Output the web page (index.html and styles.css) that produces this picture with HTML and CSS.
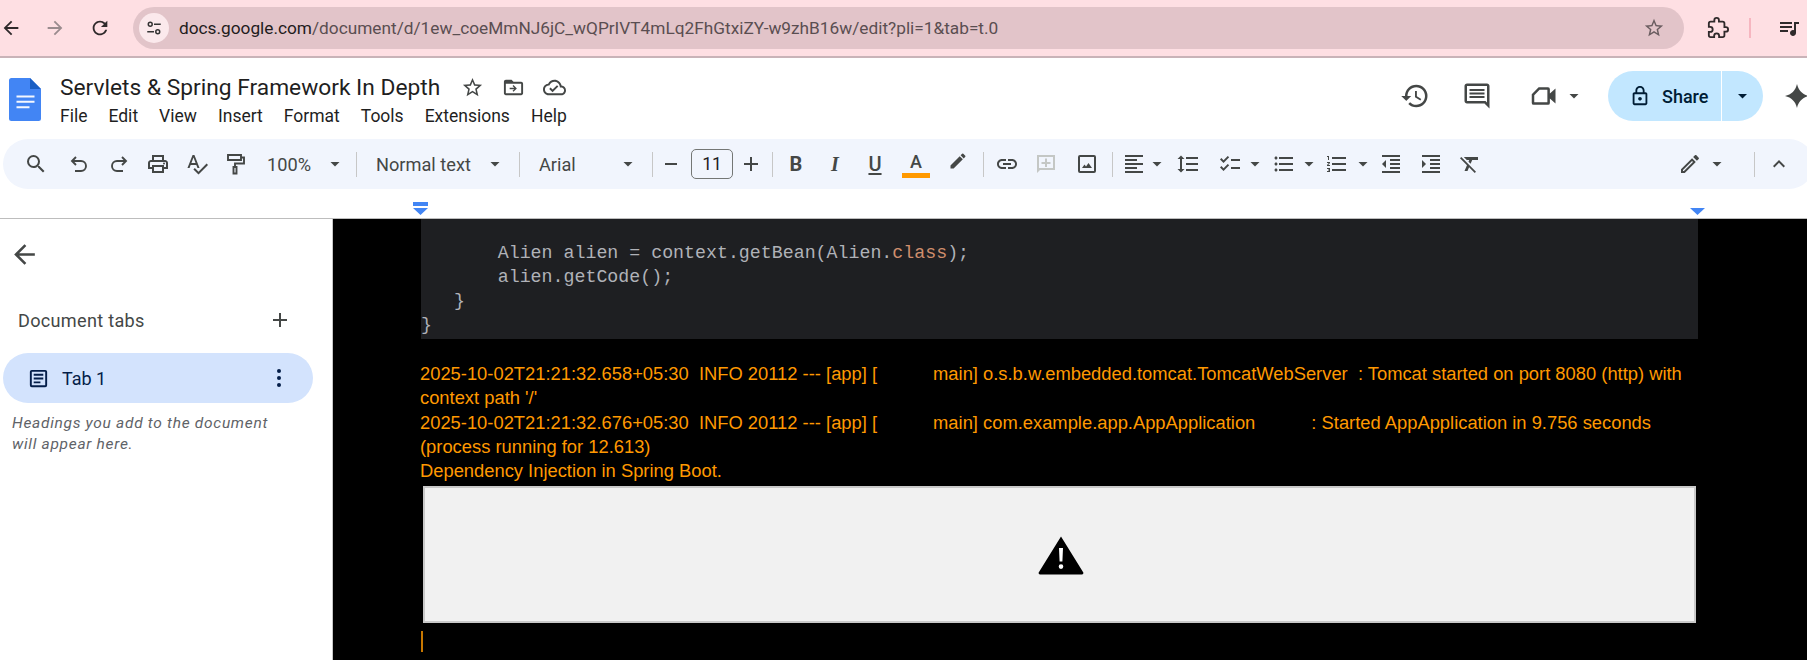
FILE: index.html
```html
<!DOCTYPE html>
<html lang="en">
<head>
<meta charset="utf-8">
<title>Servlets &amp; Spring Framework In Depth - Google Docs</title>
<link rel="stylesheet" href="styles.css">
</head>
<body>
<header class="chrome">
  <svg class="ci back" viewBox="0 0 24 24"><path d="M20 11H7.830l5.590-5.590L12 4l-8 8 8 8 1.410-1.410L7.830 13H20v-2z"/></svg>
  <svg class="ci fwd" viewBox="0 0 24 24"><path d="M12 4l-1.410 1.410L16.170 11H4v2h12.170l-5.580 5.590L12 20l8-8z"/></svg>
  <svg class="ci reload" viewBox="0 0 24 24"><path d="M17.650 6.350A7.958 7.958 0 0 0 12 4c-4.420 0-7.990 3.580-7.990 8s3.570 8 7.990 8c3.730 0 6.840-2.550 7.730-6h-2.080A5.990 5.990 0 0 1 12 18c-3.310 0-6-2.690-6-6s2.690-6 6-6c1.660 0 3.140.69 4.220 1.780L13 11h7V4l-2.350 2.350z"/></svg>
  <div class="omnibox">
    <span class="tune"><svg viewBox="0 0 24 24" class="tune-i"><circle cx="7" cy="7" r="2.600"/><path d="M12 7h9M3 17h9"/><circle cx="17" cy="17" r="2.600"/></svg></span>
    <span class="url"><b>docs.google.com</b>/document/d/1ew_coeMmNJ6jC_wQPrIVT4mLq2FhGtxiZY-w9zhB16w/edit?pli=1&amp;tab=t.0</span>
    <svg class="ci url-star" viewBox="0 0 24 24"><path d="M22 9.240l-7.190-.62L12 2 9.190 8.630 2 9.240l5.460 4.730L5.820 21 12 17.270 18.180 21l-1.630-7.030L22 9.240zM12 15.400l-3.760 2.270 1-4.280-3.320-2.880 4.380-.38L12 6.100l1.710 4.040 4.380.38-3.320 2.880 1 4.280L12 15.400z"/></svg>
  </div>
  <svg class="ci puzzle" viewBox="0 0 24 24"><path d="M20.500 11H19V7c0-1.100-.9-2-2-2h-4V3.500C13 2.120 11.880 1 10.500 1S8 2.120 8 3.500V5H4c-1.100 0-1.990.9-1.990 2v3.800H3.500c1.490 0 2.700 1.210 2.700 2.700s-1.210 2.700-2.700 2.700H2V20c0 1.100.9 2 2 2h3.800v-1.500c0-1.490 1.210-2.700 2.700-2.700 1.490 0 2.700 1.210 2.700 2.700V22H17c1.100 0 2-.9 2-2v-4h1.500c1.380 0 2.500-1.120 2.500-2.500S21.880 11 20.500 11z"/></svg>
  <span class="chrome-div"></span>
  <svg class="ci music" viewBox="0 0 24 24"><path d="M15 6H3v2h12V6zm0 4H3v2h12v-2zM3 16h8v-2H3v2zM17 6v8.180c-.31-.11-.65-.18-1-.18-1.660 0-3 1.340-3 3s1.340 3 3 3 3-1.340 3-3V8h3V6h-5z"/></svg>
</header>

<section class="docbar">
  <svg class="logo" viewBox="0 0 32 43"><path class="logo-page" d="M2.500 0H21l11 11v29.500a2.500 2.500 0 0 1-2.500 2.500h-27A2.500 2.500 0 0 1 0 40.500v-38A2.500 2.500 0 0 1 2.500 0z"/><path class="logo-fold" d="M21 0l11 11H21z"/><path class="logo-line" d="M7.500 17.500h18v2h-18zM7.500 22.800h18v2h-18zM7.500 28.200h13v2h-13z"/></svg>
  <div class="docmeta">
    <div class="titlerow">
      <h1 class="title">Servlets &amp; Spring Framework In Depth</h1>
      <svg class="ti first" viewBox="0 0 24 24"><path d="M22 9.240l-7.190-.62L12 2 9.190 8.630 2 9.240l5.460 4.730L5.820 21 12 17.270 18.180 21l-1.630-7.030L22 9.240zM12 15.400l-3.760 2.270 1-4.280-3.320-2.880 4.380-.38L12 6.100l1.710 4.040 4.380.38-3.320 2.880 1 4.280L12 15.400z"/></svg>
      <svg class="ti" viewBox="0 0 24 24"><path d="M20 6h-8l-2-2H4c-1.100 0-2 .9-2 2v12c0 1.100.9 2 2 2h16c1.100 0 2-.9 2-2V8c0-1.100-.9-2-2-2zm0 12H4V8h16v10zM12 9.500l-1 1 1.800 1.800H8v1.400h4.800L11 15.500l1 1 3.500-3.500z"/></svg>
      <svg class="ti" viewBox="0 0 24 24"><path d="M19.350 10.040C18.670 6.590 15.640 4 12 4 9.110 4 6.600 5.640 5.350 8.040 2.340 8.360 0 10.910 0 14c0 3.310 2.690 6 6 6h13c2.760 0 5-2.240 5-5 0-2.640-2.050-4.780-4.650-4.960zM19 18H6c-2.210 0-4-1.790-4-4 0-2.050 1.530-3.760 3.560-3.970l1.070-.11.5-.95C8.080 7.140 9.940 6 12 6c2.620 0 4.880 1.860 5.390 4.430l.3 1.500 1.530.11c1.560.1 2.780 1.410 2.780 2.960 0 1.650-1.350 3-3 3zm-9-3.820l-2.090-2.090L6.500 13.500 10 17l6.010-6.010-1.410-1.410z"/></svg>
    </div>
    <nav class="menu"><span>File</span><span>Edit</span><span>View</span><span>Insert</span><span>Format</span><span>Tools</span><span>Extensions</span><span>Help</span></nav>
  </div>
  <div class="docactions">
    <svg class="ai" viewBox="0 0 24 24"><path d="M13 3a9 9 0 0 0-9 9H1l3.890 3.890.07.14L9 12H6c0-3.870 3.130-7 7-7s7 3.130 7 7-3.130 7-7 7c-1.930 0-3.680-.79-4.940-2.060l-1.420 1.420A8.954 8.954 0 0 0 13 21a9 9 0 0 0 0-18zm-1 5v5l4.280 2.540.72-1.210-3.500-2.080V8H12z"/></svg>
    <svg class="ai comment" viewBox="0 0 24 24"><path d="M22 4c0-1.100-.9-2-2-2H4c-1.100 0-2 .9-2 2v12c0 1.100.9 2 2 2h14l4 4V4zm-2 13.170L18.830 16H4V4h16v13.170zM6 12h12v1.600H6zM6 9.200h12v1.600H6zM6 6.400h12V8H6z"/></svg>
    <svg class="ai video" viewBox="0 0 24 24"><path d="M8.500 5H16a1.500 1.500 0 0 1 1.500 1.500V10l4.500-4v12l-4.500-4v3.500A1.500 1.500 0 0 1 16 19H4.500A1.500 1.500 0 0 1 3 17.500V10.500zM9.300 7 5 11.300V17h10.500V7z"/></svg>
    <span class="caret video-caret"></span>
    <div class="share">
      <span class="share-main">
        <svg class="lock" viewBox="0 0 24 24"><path d="M18 8h-1V6c0-2.760-2.240-5-5-5S7 3.240 7 6v2H6c-1.100 0-2 .9-2 2v10c0 1.100.9 2 2 2h12c1.100 0 2-.9 2-2V10c0-1.100-.9-2-2-2zM9 6c0-1.660 1.340-3 3-3s3 1.340 3 3v2H9V6zm9 14H6V10h12v10zm-6-3c1.100 0 2-.9 2-2s-.9-2-2-2-2 .9-2 2 .9 2 2 2z"/></svg>
        Share
      </span>
      <span class="share-more"><span class="caret dark"></span></span>
    </div>
    <svg class="gem" viewBox="0 0 24 24"><path d="M12 0c1.500 6.500 5.500 10.500 12 12-6.500 1.500-10.500 5.500-12 12-1.500-6.500-5.500-10.500-12-12 6.500-1.500 10.500-5.500 12-12z"/></svg>
  </div>
</section>

<section class="toolbar">
  <svg class="i" viewBox="0 0 24 24"><path d="M15.500 14h-.79l-.28-.27A6.471 6.471 0 0 0 16 9.500 6.500 6.500 0 1 0 9.500 16c1.610 0 3.090-.59 4.230-1.570l.27.28v.79l5 4.990L20.490 19l-4.990-5zm-6 0C7.010 14 5 11.990 5 9.500S7.010 5 9.500 5 14 7.010 14 9.500 11.990 14 9.500 14z"/></svg>
  <svg class="i s m19" viewBox="0 0 24 24"><path d="M9 5 5 9l4 4M5 9h9a5 5 0 0 1 0 10H8"/></svg>
  <svg class="i s m16" viewBox="0 0 24 24"><path d="M15 5l4 4-4 4M19 9h-9a5 5 0 0 0 0 10h6"/></svg>
  <svg class="i m15" viewBox="0 0 24 24"><path d="M19 8h-1V3H6v5H5c-1.660 0-3 1.340-3 3v6h4v4h12v-4h4v-6c0-1.660-1.340-3-3-3zM8 5h8v3H8V5zm8 14H8v-4h8v4zm2-4v-2H6v2H4v-4c0-.55.45-1 1-1h14c.55 0 1 .45 1 1v4h-2z"/><circle cx="18" cy="11.500" r="1"/></svg>
  <svg class="i m15" viewBox="0 0 24 24"><path d="M12.450 16h2.090L9.430 3H7.570L2.460 16h2.090l1.120-3h5.640l1.140 3zm-6.020-5L8.500 5.480 10.570 11H6.430zm15.160.59l-8.090 8.090L9.830 16l-1.410 1.410 5.090 5.090L23 13l-1.410-1.410z"/></svg>
  <svg class="i s m14" viewBox="0 0 24 24"><path d="M5 3h13v5H5zM18 5.500h3v6h-9V15M10.500 15h3v6.500h-3z"/></svg>
  <span class="tt zoomv m20">100%</span>
  <span class="caret m16"></span>
  <span class="sep m15"></span>
  <span class="tt stylev m19">Normal text</span>
  <span class="caret m17"></span>
  <span class="sep m18"></span>
  <span class="tt fontv m19">Arial</span>
  <span class="caret m46"></span>
  <span class="sep m18"></span>
  <svg class="i m6" viewBox="0 0 24 24"><path d="M6 11h12v2H6z"/></svg>
  <span class="sizebox m8">11</span>
  <svg class="i m6" viewBox="0 0 24 24"><path d="M19 13h-6v6h-2v-6H5v-2h6V5h2v6h6v2z"/></svg>
  <span class="sep m9"></span>
  <span class="fmt bold m11">B</span>
  <span class="fmt ital m15">I</span>
  <span class="fmt under m16">U</span>
  <span class="fmt color m15">A<i class="colorbar"></i></span>
  <svg class="hl m18" viewBox="0 0 24 24"><path d="M3 17.250V21h3.750L17.810 9.940l-3.750-3.750L3 17.250zM20.710 7.040a.996.996 0 0 0 0-1.410l-2.340-2.340a.996.996 0 0 0-1.410 0l-1.830 1.830 3.750 3.750 1.830-1.830z"/></svg>
  <span class="sep m15"></span>
  <svg class="i m11" viewBox="0 0 24 24"><path d="M3.900 12c0-1.710 1.390-3.100 3.100-3.100h4V7H7c-2.760 0-5 2.240-5 5s2.240 5 5 5h4v-1.900H7c-1.710 0-3.100-1.390-3.100-3.100zM8 13h8v-2H8v2zm9-6h-4v1.900h4c1.710 0 3.100 1.390 3.100 3.100s-1.390 3.100-3.100 3.100h-4V17h4c2.760 0 5-2.240 5-5s-2.240-5-5-5z"/></svg>
  <svg class="i dim m15" viewBox="0 0 24 24"><path d="M3 3h18v15H6l-3 3zM5 5v11.200L5.200 16H19V5zM11 6.500h2V10h3.500v2H13v3h-2v-3H7.500v-2H11z"/></svg>
  <svg class="i m17" viewBox="0 0 24 24"><path d="M19 3H5a2 2 0 0 0-2 2v14a2 2 0 0 0 2 2h14a2 2 0 0 0 2-2V5a2 2 0 0 0-2-2zm0 16H5V5h14v14zM13.500 11l-2.500 3.500-1.500-2L7 16h10z"/></svg>
  <span class="sep m13"></span>
  <svg class="i m9" viewBox="0 0 24 24"><path d="M3 3h18v2H3zM3 7h12v2H3zM3 11h18v2H3zM3 15h12v2H3zM3 19h18v2H3z"/></svg>
  <span class="caret m5"></span>
  <svg class="i m13" viewBox="0 0 24 24"><path d="M6 7h2.500L5 3.500 1.500 7H4v10H1.500L5 20.500 8.500 17H6V7zm4-2v2h12V5H10zm0 14h12v-2H10v2zm0-6h12v-2H10v2z"/></svg>
  <svg class="i m18" viewBox="0 0 24 24"><path d="M22 7h-9v2h9V7zm0 8h-9v2h9v-2zM5.540 11 2 7.460l1.410-1.410 2.120 2.120 4.240-4.240 1.410 1.410L5.540 11zm0 8L2 15.460l1.410-1.410 2.120 2.120 4.240-4.240 1.410 1.410L5.540 19z"/></svg>
  <span class="caret m7"></span>
  <svg class="i m11" viewBox="0 0 24 24"><path d="M4 10.500c-.83 0-1.500.67-1.500 1.500s.67 1.500 1.500 1.500 1.500-.67 1.500-1.500-.67-1.500-1.500-1.500zm0-6c-.83 0-1.500.67-1.500 1.500S3.170 7.500 4 7.500 5.500 6.830 5.500 6 4.830 4.500 4 4.500zm0 12c-.83 0-1.500.68-1.500 1.500s.68 1.500 1.500 1.500 1.500-.68 1.500-1.500-.67-1.500-1.500-1.500zM7 19h14v-2H7v2zm0-6h14v-2H7v2zm0-8v2h14V5H7z"/></svg>
  <span class="caret m7"></span>
  <svg class="i m10" viewBox="0 0 24 24"><path d="M2 17h2v.5H3v1h1v.5H2v1h3v-4H2v1zm1-9h1V4H2v1h1v3zm-1 3h1.800L2 13.100v.9h3v-1H3.200L5 10.900V10H2v1zm5-6v2h14V5H7zm0 14h14v-2H7v2zm0-6h14v-2H7v2z"/></svg>
  <span class="caret m8"></span>
  <svg class="i m10" viewBox="0 0 24 24"><path d="M11 17h10v-2H11v2zm-8-5l4 4V8l-4 4zm0 9h18v-2H3v2zM3 3v2h18V3H3zm8 6h10V7H11v2zm0 4h10v-2H11v2z"/></svg>
  <svg class="i m16" viewBox="0 0 24 24"><path d="M3 21h18v-2H3v2zM3 8v8l4-4-4-4zm8 9h10v-2H11v2zM3 3v2h18V3H3zm8 6h10V7H11v2zm0 4h10v-2H11v2z"/></svg>
  <svg class="i m15" viewBox="0 0 24 24"><path d="M3.270 5L2 6.270l6.970 6.970L6.500 19h3l1.570-3.660L16.730 21 18 19.730 3.550 5.270 3.270 5zM6 5v.18L8.820 8h2.400l-.72 1.680 2.100 2.100L14.210 8H20V5H6z"/></svg>
  <svg class="i push" viewBox="0 0 24 24"><path d="M14.060 9.020l.92.92L5.920 19H5v-.92l9.060-9.060M17.660 3c-.25 0-.51.1-.7.29l-1.830 1.830 3.750 3.750 1.830-1.830c.39-.39.39-1.020 0-1.410l-2.340-2.340c-.2-.2-.45-.29-.71-.29zm-3.600 3.190L3 17.250V21h3.750L17.810 9.940l-3.750-3.750z"/></svg>
  <span class="caret m9"></span>
  <span class="sep m31"></span>
  <svg class="i m12" viewBox="0 0 24 24"><path d="M7.410 15.410 12 10.830l4.590 4.580L18 14l-6-6-6 6z"/></svg>
</section>

<section class="ruler">
  <svg class="mark-left" viewBox="0 0 15 13"><path d="M0 0h15v4H0zM0 6h15l-7.500 7z"/></svg>
  <svg class="mark-right" viewBox="0 0 15 7"><path d="M0 0h15l-7.500 7z"/></svg>
</section>

<main class="workspace">
  <aside class="sidebar">
    <svg class="side-back" viewBox="0 0 24 24"><path d="M20 11H7.830l5.590-5.590L12 4l-8 8 8 8 1.410-1.410L7.830 13H20v-2z"/></svg>
    <div class="side-head"><span>Document tabs</span><svg class="side-ic" viewBox="0 0 24 24"><path d="M19 13h-6v6h-2v-6H5v-2h6V5h2v6h6v2z"/></svg></div>
    <div class="tab">
      <svg class="tab-doc" viewBox="0 0 24 24"><path d="M19 3H5a2 2 0 0 0-2 2v14a2 2 0 0 0 2 2h14a2 2 0 0 0 2-2V5a2 2 0 0 0-2-2zm0 16H5V5h14zM7 7h10v2H7zM7 11h10v2H7zM7 15h7v2H7z"/></svg>
      <span class="tab-name">Tab 1</span>
      <svg class="side-ic dots" viewBox="0 0 24 24"><circle cx="12" cy="5" r="2"/><circle cx="12" cy="12" r="2"/><circle cx="12" cy="19" r="2"/></svg>
    </div>
    <p class="side-note">Headings you add to the document<br>will appear here.</p>
  </aside>
  <article class="page">
    <div class="code">
      <div class="cl">       Alien alien = context.getBean(Alien.<span class="kw">class</span>);</div>
      <div class="cl">       alien.getCode();</div>
      <div class="cl">   }</div>
      <div class="cl">}</div>
    </div>
    <div class="log">
      <div class="ll">2025-10-02T21:21:32.658+05:30  INFO 20112 --- [app] [           main] o.s.b.w.embedded.tomcat.TomcatWebServer  : Tomcat started on port 8080 (http) with</div>
      <div class="ll">context path '/'</div>
      <div class="ll">2025-10-02T21:21:32.676+05:30  INFO 20112 --- [app] [           main] com.example.app.AppApplication           : Started AppApplication in 9.756 seconds</div>
      <div class="ll">(process running for 12.613)</div>
      <div class="ll">Dependency Injection in Spring Boot.</div>
    </div>
    <div class="broken">
      <svg class="warn" viewBox="0 0 46 40"><path d="M23 1.500 45 37a1.500 1.500 0 0 1-1.300 2.500H2.300A1.500 1.500 0 0 1 1 37z" /><path class="warn-mark" d="M21 13h4l-.6 13.500h-2.800zM23 29.300a2.300 2.300 0 1 1 0 4.600 2.300 2.300 0 0 1 0-4.600z"/></svg>
    </div>
    <span class="cursor"></span>
  </article>
</main>
</body>
</html>
```
FILE: styles.css
```css
* { box-sizing: border-box; }
html, body { margin: 0; padding: 0; }
body {
  width: 1807px;
  height: 660px;
  overflow: hidden;
  background: #fff;
  font-family: Roboto, "Liberation Sans", sans-serif;
  color: #444746;
}
svg { display: block; flex: none; fill: currentColor; }

/* browser chrome */
.chrome {
  display: flex;
  align-items: center;
  height: 58px;
  background: #fedfe3;
  border-bottom: 2px solid #c9b3b8;
  color: #2f2a2b;
}
.ci { width: 22px; height: 22px; }
.fwd { margin-left: 22px; color: #9a8b8e; }
.reload { margin-left: 23px; }
.omnibox {
  display: flex;
  align-items: center;
  width: 1551px;
  height: 42px;
  margin-left: 22px;
  padding-left: 6px;
  padding-right: 19px;
  border-radius: 21px;
  background: #e2c4c9;
}
.tune {
  display: flex;
  align-items: center;
  justify-content: center;
  width: 30px;
  height: 30px;
  border-radius: 50%;
  background: #fbe9ec;
}
.tune-i { width: 18px; height: 18px; fill: none; stroke: #333; stroke-width: 2; }
.url {
  margin-left: 10px;
  font-size: 17.260px;
  color: #5a4e51;
  white-space: nowrap;
  flex: 1;
}
.url b { font-weight: 400; color: #1f1c1d; }
.url-star { color: #6a5d60; }
.puzzle {
  margin-left: 23px;
  fill: none;
  stroke: #2f2a2b;
  stroke-width: 2;
}
.chrome-div { width: 2px; height: 20px; margin-left: 20px; background: #f6b6c0; }
.music { width: 24px; height: 24px; margin-left: 26px; }

/* document header */
.docbar {
  display: flex;
  height: 81px;
  padding-top: 13px;
}
.logo { width: 32px; height: 43px; margin: 7px 0 0 9px; }
.logo-page { fill: #4285f4; }
.logo-fold { fill: #1a5fc4; }
.logo-line { fill: #f4f7fe; }
.docmeta { margin-left: 19px; display: flex; flex-direction: column; }
.titlerow { display: flex; align-items: center; height: 32px; }
.title { margin: 0; font-size: 22.750px; font-weight: 400; color: #1f1f1f; white-space: nowrap; }
.ti { width: 23px; height: 23px; margin-left: 18px; }
.ti.first { margin-left: 21px; }
.menu { display: flex; gap: 21px; margin-top: 1px; font-size: 17.500px; color: #1f1f1f; line-height: 24px; }
.docactions { display: flex; align-items: center; margin-left: auto; height: 50px; }
.ai { width: 30px; height: 30px; }
.comment { margin-left: 32px; }
.video { margin-left: 36px; }
.video-caret { margin-left: 10px; }
.share {
  display: flex;
  align-items: stretch;
  height: 50px;
  width: 155px;
  margin-left: 28px;
  border-radius: 25px;
  overflow: hidden;
  background: #c2e7ff;
  color: #001d35;
}
.share-main {
  display: flex;
  align-items: center;
  width: 114px;
  padding-left: 21px;
  font-size: 18px;
  font-weight: 500;
  border-right: 1px solid #fff;
}
.lock { width: 22px; height: 22px; margin-right: 11px; }
.share-more { flex: 1; display: flex; align-items: center; justify-content: center; }
.gem { width: 24px; height: 24px; margin-left: 22px; margin-right: -2px; color: #444746; }

/* toolbar */
.toolbar {
  display: flex;
  align-items: center;
  height: 50px;
  margin: 0 -7px 0 3px;
  padding: 0 23px 0 21px;
  border-radius: 25px;
  background: #f1f5fd;
}
.i { width: 24px; height: 24px; }
.i.s { fill: none; stroke: currentColor; stroke-width: 1.9; }
.dim { color: #c4c7c5; }
.push { margin-left: auto; }
.tt { font-size: 18.200px; white-space: nowrap; }
.zoomv { width: 46px; }
.stylev { width: 96px; }
.fontv { width: 37px; }
.caret {
  flex: none;
  width: 12px;
  height: 5px;
  background: #444746;
  clip-path: polygon(1px 0, 11px 0, 6px 5px);
}
.caret.dark { background: #001d35; }
.sep { flex: none; width: 1px; height: 25px; background: #c7c7c7; }
.sizebox {
  width: 42px;
  height: 30px;
  line-height: 28px;
  text-align: center;
  font-size: 17.500px;
  border: 1px solid #747775;
  border-radius: 5px;
  color: #1f1f1f;
}
.fmt {
  width: 24px;
  font-size: 20px;
  line-height: 24px;
  text-align: center;
  flex: none;
}
.bold { font-weight: 700; }
.ital { font-family: "Liberation Serif", serif; font-weight: 700; font-style: italic; }
.under { font-weight: 500; text-decoration: underline; text-underline-offset: 2px; }
.fmt.color {
  display: flex;
  flex-direction: column;
  align-items: center;
  width: 28px;
  height: 26px;
  margin-top: 2px;
  font-size: 18px;
  line-height: 20px;
  font-weight: 500;
}
.colorbar { display: block; width: 28px; height: 5px; margin-top: 1px; background: #ff9900; }
.hl { width: 20px; height: 20px; margin-bottom: 6px; }

.m5 { margin-left: 5px; } .m6 { margin-left: 6px; } .m7 { margin-left: 7px; }
.m8 { margin-left: 8px; } .m9 { margin-left: 9px; } .m10 { margin-left: 10px; }
.m11 { margin-left: 11px; } .m12 { margin-left: 12px; } .m13 { margin-left: 13px; }
.m14 { margin-left: 14px; } .m15 { margin-left: 15px; } .m16 { margin-left: 16px; }
.m17 { margin-left: 17px; } .m18 { margin-left: 18px; } .m19 { margin-left: 19px; }
.m20 { margin-left: 20px; } .m31 { margin-left: 31px; } .m46 { margin-left: 46px; }

/* ruler */
.ruler {
  display: flex;
  align-items: flex-end;
  height: 30px;
  padding: 0 0 3px 413px;
  border-bottom: 1px solid #bdbdbd;
}
.mark-left { width: 15px; height: 13px; fill: #4285f4; }
.mark-right { width: 15px; height: 7px; margin-left: 1262px; fill: #4285f4; }

/* workspace */
.workspace { display: flex; height: 441px; }
.sidebar {
  flex: none;
  width: 333px;
  padding-top: 20px;
  border-right: 1px solid #c7c7c7;
}
.side-back { width: 31px; height: 31px; margin-left: 9px; }
.side-head {
  display: flex;
  align-items: center;
  justify-content: space-between;
  height: 28px;
  margin-top: 36px;
  padding: 0 40px 0 18px;
  font-size: 18.100px;
  letter-spacing: .3px;
}
.side-ic { width: 24px; height: 24px; }
.tab {
  display: flex;
  align-items: center;
  width: 310px;
  height: 50px;
  margin: 19px 0 0 3px;
  padding: 0 22px 0 24px;
  border-radius: 25px;
  background: #d3e3fd;
  color: #041e49;
}
.tab-doc { width: 23px; height: 23px; }
.tab-name { margin-left: 12px; font-size: 18px; flex: 1; }
.side-note {
  margin: 10px 0 0 12px;
  font-size: 15.500px;
  line-height: 21px;
  font-style: italic;
  letter-spacing: .7px;
  color: #5f6368;
}
.page {
  flex: 1;
  min-width: 0;
  padding-left: 88px;
  background: #000;
}
.code {
  width: 1277px;
  height: 120px;
  padding-top: 22px;
  font-family: "Liberation Mono", monospace;
  font-size: 18.270px;
  line-height: 24px;
  background: #1e1f22;
  color: #b0b2b8;
}
.cl { height: 24px; white-space: pre; }
.kw { color: #cf8e6d; }
.log {
  margin: 23px 0 0 -1px;
  font-family: "Liberation Sans", Arial, sans-serif;
  font-size: 18.350px;
  line-height: 24.300px;
  color: #ff9900;
}
.ll { height: 24.300px; white-space: pre; }
.broken {
  display: flex;
  align-items: center;
  justify-content: center;
  width: 1273px;
  height: 137px;
  margin: 3px 0 0 2px;
  padding-left: 3px;
  border: 2px solid #c9c9c9;
  background: #f1f1f1;
}
.warn { width: 46px; height: 40px; color: #000; }
.warn-mark { fill: #fff; }
.cursor { display: block; width: 2px; height: 21px; margin-top: 8px; background: #c77700; }
```
